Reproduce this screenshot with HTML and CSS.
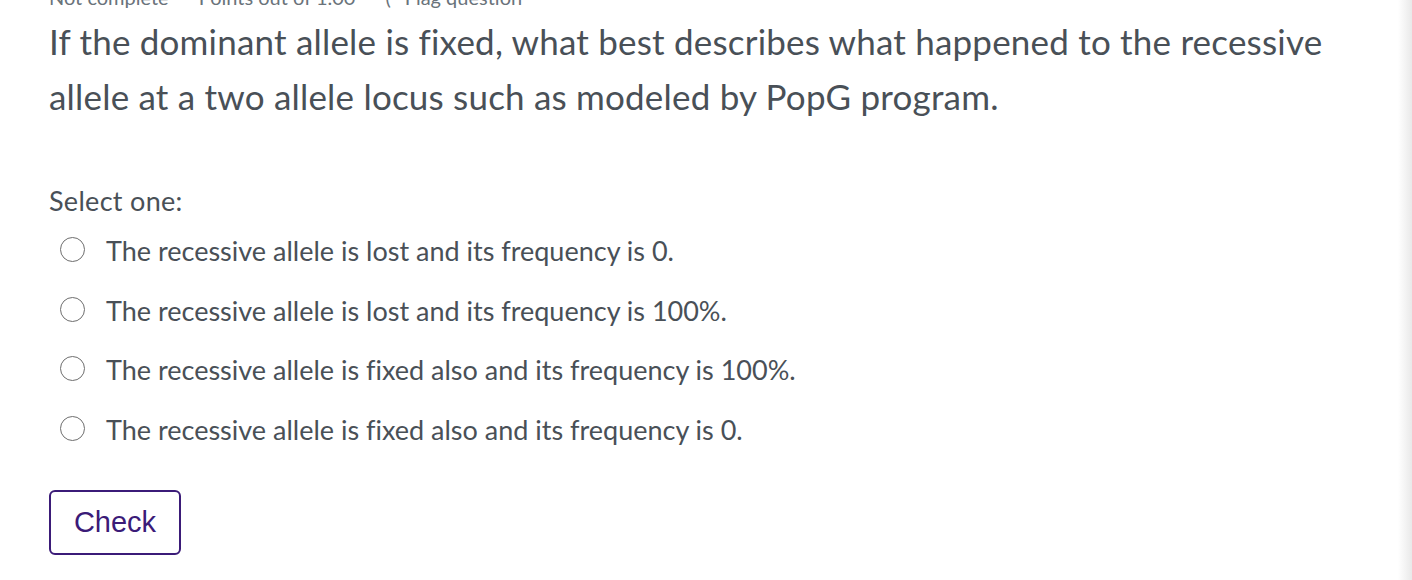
FILE: index.html
```html
<!DOCTYPE html>
<html lang="en">
<head>
  <meta charset="UTF-8">
  <title>Question</title>
  <link rel="stylesheet" href="styles.css">
</head>
<body>

  <div class="que">
    <div class="que-info">
      <span>Not complete</span>
      <span>Points out of 1.00</span>
      <span class="flag"><span class="flag-icon">(</span>Flag question</span>
    </div>

    <div class="qtext">
      If the dominant allele is fixed, what best describes what happened to the recessive
      allele at a two allele locus such as modeled by PopG program.
    </div>

    <div class="ablock">
      <p class="prompt">Select one:</p>
      <div class="answer">
        <label class="option"><input type="radio" name="q1"><span>The recessive allele is lost and its frequency is 0.</span></label>
        <label class="option"><input type="radio" name="q1"><span>The recessive allele is lost and its frequency is 100%.</span></label>
        <label class="option"><input type="radio" name="q1"><span>The recessive allele is fixed also and its frequency is 100%.</span></label>
        <label class="option"><input type="radio" name="q1"><span>The recessive allele is fixed also and its frequency is 0.</span></label>
      </div>
    </div>

    <button type="button" class="btn-check">Check</button>
  </div>

</body>
</html>
```

FILE: styles.css
```css
html {
  background: linear-gradient(to right, #fff calc(100% - 14px), #e9e9e9);
  min-height: 100%;
}
body {
  margin: 0;
  padding: 0 49px;
  font-family: "Lato", "Open Sans", sans-serif;
  font-variant-ligatures: none;
  color: #495057;
}
.que-info {
  display: flex;
  gap: 30px;
  margin-top: -13px;
  height: 20px;
  font-size: 20px;
  line-height: 20px;
  color: #6a737b;
  white-space: nowrap;
}
.que-info .flag-icon {
  margin-right: 14px;
}
.qtext {
  font-size: 35px;
  letter-spacing: 0.2px;
  line-height: 55px;
  margin-top: 7px;
}
.ablock {
  margin-top: 57px;
}
.prompt {
  margin: 0;
  font-size: 27px;
  letter-spacing: 0.3px;
  line-height: 40px;
}
.answer {
  display: flex;
  flex-direction: column;
  margin-top: -1px;
}
.option {
  display: flex;
  align-items: center;
  gap: 21px;
  height: 59.5px;
  padding-left: 11px;
  font-size: 27px;
}
.option input {
  appearance: none;
  -webkit-appearance: none;
  margin: 0;
  width: 25px;
  height: 25px;
  border: 1.5px solid #6e6e6e;
  border-radius: 50%;
  background: #fff;
}
.option span {
  position: relative;
  top: 1px;
}
.btn-check {
  margin-top: 32px;
  width: 132px;
  height: 65px;
  border: 2px solid #3b1b78;
  border-radius: 6px;
  background: #fff;
  color: #3b1b78;
  font-family: "Liberation Sans", Arial, sans-serif;
  font-size: 29px;
  cursor: pointer;
}
```
